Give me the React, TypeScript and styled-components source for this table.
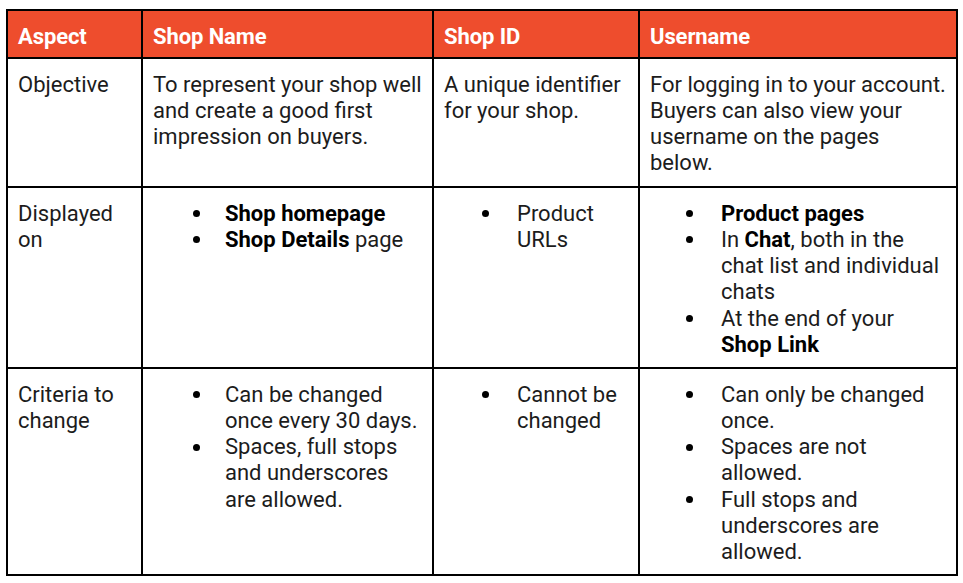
import React from "react";
import styled, { createGlobalStyle } from "styled-components";

const GlobalStyle = createGlobalStyle`
  html, body {
    margin: 0;
    padding: 0;
    background: #ffffff;
  }
  body {
    font-family: Roboto, "Liberation Sans", Arial, sans-serif;
  }
`;

const Page = styled.div`
  padding: 9px 0 0 6px;
`;

const Table = styled.div`
  display: grid;
  grid-template-columns: 133px 289px 204px 316px;
  grid-template-rows: 46px 127px 179px 205px;
  gap: 2px;
  padding: 2px;
  background: #000000;
  width: max-content;
`;

const HeadCell = styled.div`
  background: #ee4d2d;
  color: #ffffff;
  font-weight: 700;
  font-size: 22px;
  line-height: 26.3px;
  padding: 12.5px 10px 0 10px;
  letter-spacing: -0.1px;
`;

const Cell = styled.div`
  background: #ffffff;
  color: #1c1c1c;
  font-size: 22px;
  line-height: 26.3px;
  padding: 12.5px 10px 0 10px;
`;

const List = styled.ul<{ $indent: number }>`
  list-style: none;
  margin: 0;
  padding: 0 0 0 ${(p) => p.$indent}px;
`;

const Item = styled.li`
  display: flex;
  align-items: flex-start;
`;

const Marker = styled.span`
  flex: 0 0 34px;
  height: 26.3px;
  display: flex;
  align-items: center;
`;

const Dot = styled.span<{ $offset: number }>`
  width: 7px;
  height: 7px;
  border-radius: 50%;
  background: #000000;
  margin-left: ${(p) => p.$offset}px;
`;

const ItemText = styled.span`
  flex: 1;
`;

const Strong = styled.b`
  font-weight: 700;
  color: #000000;
`;

const Bullets: React.FC<{ indent?: number; offset?: number; items: React.ReactNode[] }> = ({
  indent = 38,
  offset = 2,
  items,
}) => (
  <List $indent={indent}>
    {items.map((it, i) => (
      <Item key={i}>
        <Marker>
          <Dot $offset={offset} />
        </Marker>
        <ItemText>{it}</ItemText>
      </Item>
    ))}
  </List>
);

export default function App() {
  return (
    <>
      <GlobalStyle />
      <Page>
        <Table>
          <HeadCell>Aspect</HeadCell>
          <HeadCell>Shop Name</HeadCell>
          <HeadCell>Shop ID</HeadCell>
          <HeadCell>Username</HeadCell>

          <Cell>Objective</Cell>
          <Cell>To represent your shop well and create a good first impression on buyers.</Cell>
          <Cell>A unique identifier for your shop.</Cell>
          <Cell>
            For logging in to your account. Buyers can also view your username on the pages
            below.
          </Cell>

          <Cell>Displayed on</Cell>
          <Cell>
            <Bullets
              items={[
                <Strong>Shop homepage</Strong>,
                <>
                  <Strong>Shop Details</Strong> page
                </>,
              ]}
            />
          </Cell>
          <Cell>
            <Bullets indent={39} offset={-1} items={["Product URLs"]} />
          </Cell>
          <Cell>
            <Bullets
              indent={37}
              offset={-1}
              items={[
                <Strong>Product pages</Strong>,
                <>
                  In <Strong>Chat</Strong>, both in the chat list and individual chats
                </>,
                <>
                  At the end of your <Strong>Shop Link</Strong>
                </>,
              ]}
            />
          </Cell>

          <Cell>Criteria to change</Cell>
          <Cell>
            <Bullets
              items={[
                "Can be changed once every 30 days.",
                "Spaces, full stops and underscores are allowed.",
              ]}
            />
          </Cell>
          <Cell>
            <Bullets indent={39} offset={-1} items={["Cannot be changed"]} />
          </Cell>
          <Cell>
            <Bullets
              indent={37}
              offset={-1}
              items={[
                "Can only be changed once.",
                "Spaces are not allowed.",
                "Full stops and underscores are allowed.",
              ]}
            />
          </Cell>
        </Table>
      </Page>
    </>
  );
}
